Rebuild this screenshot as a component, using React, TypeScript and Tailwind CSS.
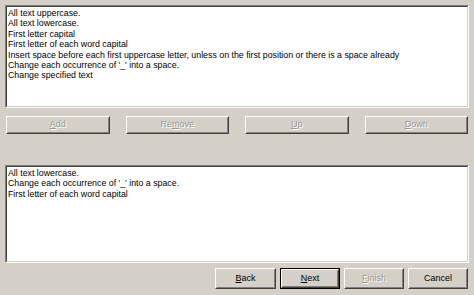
import React from "react";

const topItems = [
  "All text uppercase.",
  "All text lowercase.",
  "First letter capital",
  "First letter of each word capital",
  "Insert space before each first uppercase letter, unless on the first position or there is a space already",
  "Change each occurrence of '_' into a space.",
  "Change specified text",
];

const bottomItems = [
  "All text lowercase.",
  "Change each occurrence of '_' into a space.",
  "First letter of each word capital",
];

function ListBox({ items, h }: { items: string[]; h: string }) {
  return (
    <div className={`border border-t-[#808080] border-l-[#808080] border-b-white border-r-white ${h}`}>
      <div className="h-full border border-t-[#404040] border-l-[#404040] border-b-[#d4d0c8] border-r-[#d4d0c8] bg-white pl-[1px] pt-[1px]">
        {items.map((t, i) => (
          <div key={i} className="text-[8.8px] leading-[10.4px] text-black whitespace-nowrap">
            {t}
          </div>
        ))}
      </div>
    </div>
  );
}

function Btn({
  label,
  u,
  disabled,
  def,
  h,
  w,
}: {
  label: string;
  u: number;
  disabled?: boolean;
  def?: boolean;
  h: string;
  w?: string;
}) {
  const text = (
    <span>
      {label.slice(0, u)}
      <span className="underline">{label.slice(u, u + 1)}</span>
      {label.slice(u + 1)}
    </span>
  );
  const inner = (
    <div className="h-full border border-t-white border-l-white border-b-[#404040] border-r-[#404040]">
      <div
        className={`h-full border border-t-[#d4d0c8] border-l-[#d4d0c8] border-b-[#808080] border-r-[#808080] flex items-center justify-center text-[9px] ${
          disabled ? "text-[#9a9892] [text-shadow:1px_1px_0_#ffffff]" : "text-black"
        }`}
      >
        {u >= 0 ? text : label}
      </div>
    </div>
  );
  return (
    <div className={`${h} ${w ?? ""} ${def ? "border border-black" : ""}`}>{inner}</div>
  );
}

export default function App() {
  return (
    <div
      className="w-[474px] h-[295px] bg-[#d4d0c8] flex flex-col px-[5px] pt-[5px] overflow-hidden"
      style={{ fontFamily: '"Liberation Sans", Arial, sans-serif' }}
    >
      <ListBox items={topItems} h="h-[103px]" />
      <div className="mt-[8px] mx-[1px] grid grid-cols-4 gap-x-[16px]">
        <Btn label="Add" u={0} disabled h="h-[18px]" />
        <Btn label="Remove" u={2} disabled h="h-[18px]" />
        <Btn label="Up" u={0} disabled h="h-[18px]" />
        <Btn label="Down" u={0} disabled h="h-[18px]" />
      </div>
      <div className="mt-[31px]">
        <ListBox items={bottomItems} h="h-[98px]" />
      </div>
      <div className="mt-[5px] mr-[1px] flex justify-end gap-x-[4px]">
        <Btn label="Back" u={0} h="h-[21px]" w="w-[61px]" />
        <Btn label="Next" u={0} def h="h-[21px]" w="w-[60px]" />
        <Btn label="Finish" u={0} disabled h="h-[21px]" w="w-[60px]" />
        <Btn label="Cancel" u={-1} h="h-[21px]" w="w-[60px]" />
      </div>
    </div>
  );
}
